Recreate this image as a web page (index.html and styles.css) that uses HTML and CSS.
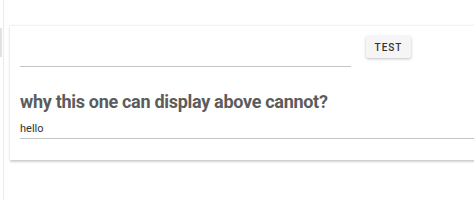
FILE: index.html
```html
<!DOCTYPE html>
<html lang="en">

<head>
    <meta charset="UTF-8">
    <meta name="viewport" content="width=device-width, initial-scale=1.0">
    <title>Display test</title>
    <link rel="stylesheet" href="styles.css">
</head>

<body>
    <div class="page">
        <!-- thin left rail with a scroll thumb -->
        <div class="rail">
            <div class="rail-thumb"></div>
        </div>

        <!-- main card -->
        <div class="card">
            <div class="toolbar">
                <div class="field"></div>
                <button class="test-btn">Test</button>
            </div>
            <h2 class="title">why this one can display above cannot?</h2>
            <div class="hello-field">hello</div>
        </div>
    </div>
</body>

</html>
```

FILE: styles.css
```css
body {
    margin: 0;
    padding: 0;
    font-family: Roboto, "Liberation Sans", sans-serif;
    background-color: #fff;
    color: #555;
    overflow: hidden;
}

.page {
    display: flex;
    height: 200px;
}

/* Left rail */
.rail {
    flex: 0 0 3px;
    border-right: 1px solid #ececec;
}

.rail-thumb {
    margin-top: 28px;
    width: 2px;
    height: 29px;
    background-color: #e2e2e2;
}

/* Card */
.card {
    flex: 0 0 auto;
    width: 470px;
    margin-left: 6px;
    margin-top: 25px;
    height: 134px;
    padding: 0 0 0 10px;
    background-color: #fff;
    border-top: 1px solid #f2f2f2;
    box-shadow: 0 2px 2px rgba(0, 0, 0, 0.18), 0 0 1px rgba(0, 0, 0, 0.1);
}

.toolbar {
    display: flex;
    align-items: flex-start;
}

.field {
    width: 331px;
    height: 40px;
    border-bottom: 1px solid #c4c4c4;
}

.test-btn {
    margin-left: 15px;
    margin-top: 10px;
    width: 45px;
    height: 22px;
    padding: 0;
    border: none;
    border-radius: 2px;
    background-color: #f5f5f5;
    box-shadow: 0 1px 3px rgba(0, 0, 0, 0.25);
    font-family: Roboto, "Liberation Sans", sans-serif;
    font-size: 10px;
    font-weight: 500;
    letter-spacing: 1px;
    text-transform: uppercase;
    color: #333;
}

.title {
    margin: 24px 0 0 0;
    font-size: 18px;
    font-weight: 700;
    line-height: 22px;
    letter-spacing: -0.3px;
    color: #5c5c5c;
}

.hello-field {
    margin-top: 9px;
    padding-bottom: 2px;
    font-size: 11px;
    line-height: 14px;
    color: #333;
    border-bottom: 1px solid #c4c4c4;
}
```
